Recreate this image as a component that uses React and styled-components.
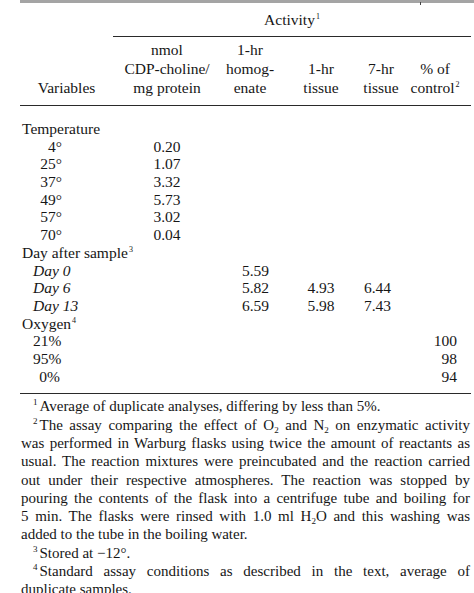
import React from 'react';
import styled, { createGlobalStyle } from 'styled-components';

const GlobalStyle = createGlobalStyle`
    html, body {
        margin: 0;
        padding: 0;
        background: #fff;
    }
    body {
        font-family: "Liberation Serif", "Times New Roman", serif;
        color: #161616;
        overflow: hidden;
    }
`;

const COLUMNS = '93px 108px 58px 84px 36px 72px';

const Page = styled("div")`
    width: 474px;
    height: 593px;
    overflow: hidden;
`;

const TopRule = styled("div")`
    position: relative;
    margin-left: 20px;
    height: 3px;
    background: #a4a4a4;
    &::after {
        content: '';
        position: absolute;
        left: 400px;
        top: 2px;
        width: 1px;
        height: 3px;
        background: #444;
    }
`;

const Table = styled("div")`
    margin-left: 20px;
    width: 451px;
    font-size: 15.5px;
    sup {
        font-size: 8px;
        line-height: 0;
        vertical-align: 6px;
        margin-left: 1px;
    }
`;

const Head = styled("div")`
    display: grid;
    grid-template-columns: ${COLUMNS};
    border-bottom: 1.5px solid #2a2a2a;
`;

const Activity = styled("div")`
    grid-column: 2 / 7;
    text-align: center;
    line-height: 18px;
    padding: 8px 0 7px;
    border-bottom: 1.5px solid #2a2a2a;
`;

const HeadCell = styled("div")`
    grid-row: 2;
    align-self: end;
    text-align: center;
    line-height: 19px;
    padding: 3px 0 8px;
    white-space: nowrap;
`;

const Body = styled("div")`
    padding: 14px 0 8px;
    border-bottom: 1.5px solid #2a2a2a;
`;

const Row = styled("div")`
    display: grid;
    grid-template-columns: ${COLUMNS};
    line-height: 17.7px;
    height: 17.7px;
    white-space: nowrap;
`;

const Group = styled("div")`
    grid-column: 1 / 7;
    padding-left: 2px;
`;

const Label = styled("div")`
    padding-left: 13px;
    font-style: ${p => (p.$italic ? 'italic' : 'normal')};
`;

const Num = styled("span")`
    display: inline-block;
    width: ${p => p.$width}px;
    text-align: right;
`;

const Val = styled("div")`
    text-align: ${p => p.$align || 'center'};
    padding-left: ${p => p.$left || 0}px;
    padding-right: ${p => p.$right || 0}px;
`;

const Notes = styled("div")`
    margin: 3px 4px 0 21px;
    font-size: 15px;
    line-height: 18.3px;
    sup {
        font-size: 9px;
        line-height: 0;
        vertical-align: 6px;
        margin-right: 2px;
    }
    sub {
        font-size: 9px;
        line-height: 0;
        vertical-align: -3px;
    }
`;

const Line = styled("div")`
    white-space: nowrap;
    text-align: ${p => (p.$last ? 'left' : 'justify')};
    text-align-last: ${p => (p.$last ? 'left' : 'justify')};
    text-indent: ${p => (p.$first ? 12 : 0)}px;
`;

const valueCols = [
    {},
    { $left: 11 },
    {},
    { $right: 7 },
    { $align: 'right', $right: 14 },
];

const groups = [
    {
        title: 'Temperature',
        rows: [
            { label: '4°', width: 29, values: ['0.20'] },
            { label: '25°', width: 29, values: ['1.07'] },
            { label: '37°', width: 29, values: ['3.32'] },
            { label: '49°', width: 29, values: ['5.73'] },
            { label: '57°', width: 29, values: ['3.02'] },
            { label: '70°', width: 29, values: ['0.04'] },
        ],
    },
    {
        title: 'Day after sample',
        note: 3,
        rows: [
            { label: 'Day 0', italic: true, values: ['', '5.59'] },
            { label: 'Day 6', italic: true, values: ['', '5.82', '4.93', '6.44'] },
            { label: 'Day 13', italic: true, values: ['', '6.59', '5.98', '7.43'] },
        ],
    },
    {
        title: 'Oxygen',
        note: 4,
        rows: [
            { label: '21%', width: 27, values: ['', '', '', '', '100'] },
            { label: '95%', width: 27, values: ['', '', '', '', '98'] },
            { label: '0%', width: 27, values: ['', '', '', '', '94'] },
        ],
    },
];

const headers = [
    ['nmol', 'CDP-choline/', 'mg protein'],
    ['1-hr', 'homog-', 'enate'],
    ['1-hr', 'tissue'],
    ['7-hr', 'tissue'],
    ['% of', <>control<sup>2</sup></>],
];

export default function App() {
    return (
        <Page>
            <GlobalStyle />
            <TopRule />
            <Table>
                <Head>
                    <Activity>Activity<sup>1</sup></Activity>
                    <HeadCell style={{ gridColumn: 1 }}>Variables</HeadCell>
                    {headers.map((lines, i) => (
                        <HeadCell key={i} style={{ gridColumn: i + 2 }}>
                            {lines.map((line, j) => <div key={j}>{line}</div>)}
                        </HeadCell>
                    ))}
                </Head>
                <Body>
                    {groups.map(group => (
                        <React.Fragment key={group.title}>
                            <Row>
                                <Group>
                                    {group.title}
                                    {group.note && <sup>{group.note}</sup>}
                                </Group>
                            </Row>
                            {group.rows.map(row => (
                                <Row key={row.label}>
                                    <Label $italic={row.italic}>
                                        {row.width ? <Num $width={row.width}>{row.label}</Num> : row.label}
                                    </Label>
                                    {valueCols.map((col, i) => (
                                        <Val key={i} {...col}>{(row.values || [])[i] || ''}</Val>
                                    ))}
                                </Row>
                            ))}
                        </React.Fragment>
                    ))}
                </Body>
            </Table>
            <Notes>
                <Line $first $last><sup>1</sup>Average of duplicate analyses, differing by less than 5%.</Line>
                <Line $first><sup>2</sup>The assay comparing the effect of O<sub>2</sub> and N<sub>2</sub> on enzymatic activity</Line>
                <Line>was performed in Warburg flasks using twice the amount of reactants as</Line>
                <Line>usual. The reaction mixtures were preincubated and the reaction carried</Line>
                <Line>out under their respective atmospheres. The reaction was stopped by</Line>
                <Line>pouring the contents of the flask into a centrifuge tube and boiling for</Line>
                <Line>5 min. The flasks were rinsed with 1.0 ml H<sub>2</sub>O and this washing was</Line>
                <Line $last>added to the tube in the boiling water.</Line>
                <Line $first $last><sup>3</sup>Stored at −12°.</Line>
                <Line $first><sup>4</sup>Standard assay conditions as described in the text, average of</Line>
                <Line $last>duplicate samples.</Line>
            </Notes>
        </Page>
    );
}
